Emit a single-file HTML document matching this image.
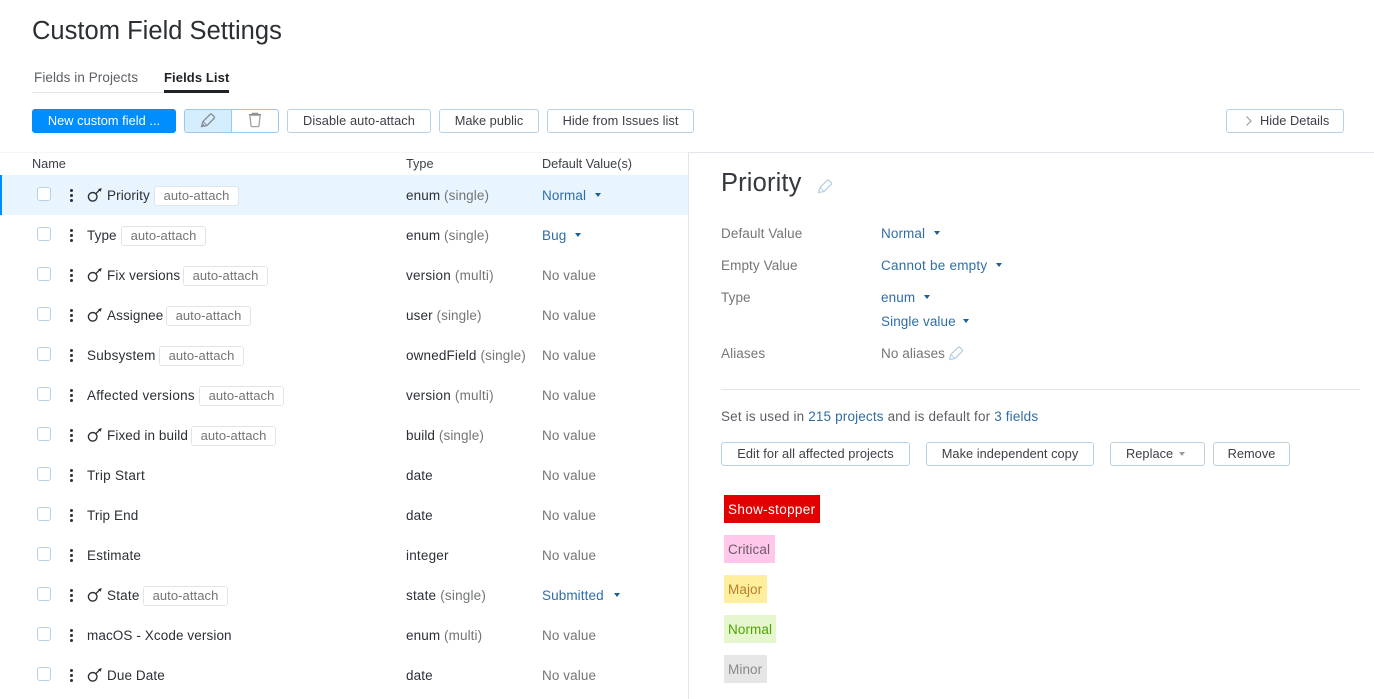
<!DOCTYPE html>
<html lang="en">
<head>
<meta charset="utf-8">
<title>Custom Field Settings</title>
<style>
html,body{margin:0;padding:0;background:#fff}
body{width:1374px;height:699px;overflow:hidden;position:relative;font-family:"Liberation Sans",sans-serif;font-size:13.5px;color:#2c2f38}
.t{position:absolute;white-space:nowrap;line-height:18px;letter-spacing:.1px;margin-top:1px}
.g{color:#737577}
.b{color:#2f6ea5}
.h{font-size:12.7px;letter-spacing:0;margin-top:0;color:#3c3f48}
.btn{position:absolute;box-sizing:border-box;height:24px;border:1px solid #b8d1e5;border-radius:3px;background:#fff;line-height:22px;text-align:center;white-space:nowrap;letter-spacing:.03px;font-size:12.8px;color:#3c3f48}
.tag{position:absolute;box-sizing:border-box;height:20px;width:85px;border:1px solid #dfe5eb;border-radius:3px;background:#fff;line-height:18px;text-align:center;color:#737577;letter-spacing:.07px;font-size:13px;white-space:nowrap}
.cb{position:absolute;left:37px;box-sizing:border-box;width:14px;height:14px;border:1px solid #b8d1e5;border-radius:3px;background:#fff}
.dots{position:absolute;left:70px;width:3px;height:3px;border-radius:50%;background:#2c2f38;box-shadow:0 5px 0 #2c2f38,0 10px 0 #2c2f38}
.car{position:absolute;width:0;height:0;border-left:3px solid transparent;border-right:3px solid transparent;border-top:4px solid #1d5f96}
.key{position:absolute;left:87px;width:16px;height:16px}
.lab{position:absolute;left:724px;height:28px;line-height:30px;padding:0 4px;box-sizing:border-box;white-space:nowrap;letter-spacing:.1px}
svg{display:block}
</style>
</head>
<body>
<div class="t" style="left:32px;top:14px;font-size:25.5px;line-height:32px;letter-spacing:.02px;color:#2b2f33">Custom Field Settings</div>

<div class="t" style="left:34px;top:68px;color:#5c6066;letter-spacing:.07px">Fields in Projects</div>
<div class="t" style="left:164px;top:68px;font-size:13px;font-weight:bold;color:#1f2326;letter-spacing:.1px">Fields List</div>
<div style="position:absolute;left:32px;top:92px;width:132px;height:1px;background:#dfe5eb"></div>
<div style="position:absolute;left:164px;top:90px;width:65px;height:3px;background:#1f2326"></div>

<div class="btn" style="left:32px;top:109px;width:144px;background:#008eff;border-color:#008eff;color:#fff">New custom field ...</div>
<div style="position:absolute;left:184px;top:109px;width:95px;height:24px;box-sizing:border-box;border:1px solid #9cc9ee;border-radius:3px;background:#fff;overflow:hidden">
  <div style="position:absolute;left:0;top:0;width:46px;height:22px;background:#d4edff;border-right:1px solid #9cc9ee"></div>
</div>
<svg style="position:absolute;left:200px;top:112px" width="16" height="16" viewBox="0 0 16 16" fill="none" stroke="#8a8d90" stroke-width="1.300"><path d="M1.500 14.500L3 9.500l7-7q1-1 2 0l2 2q1 1 0 2l-7 7z"/><path d="M3 9.500l4 4" stroke-width="1"/><path d="M1.500 14.500l1-3.200 2.200 2.200z" fill="#8a8d90" stroke="none"/></svg>
<svg style="position:absolute;left:247px;top:112px" width="16" height="16" viewBox="0 0 16 16" fill="none" stroke="#8a8d90"><path d="M2 2.800h12" stroke-width="1.800"/><path d="M5.500 2.500V1.300h5v1.200" stroke-width="1.200"/><path d="M3 4l1 10 .8.600h6.400l.8-.6 1-10" stroke="#a0a2a4" stroke-width="1.300"/></svg>

<div class="btn" style="left:287px;top:109px;width:144px;letter-spacing:.09px">Disable auto-attach</div>
<div class="btn" style="left:439px;top:109px;width:100px">Make public</div>
<div class="btn" style="left:547px;top:109px;width:147px">Hide from Issues list</div>
<div class="btn" style="left:1226px;top:109px;width:118px;text-align:left;padding-left:33px">Hide Details</div>
<svg style="position:absolute;left:1245px;top:115px" width="8" height="12" viewBox="0 0 8 12" fill="none" stroke="#999" stroke-width="1.100"><path d="M1.500 1.500L6 6l-4.500 4.500"/></svg>

<div style="position:absolute;left:0;top:152px;width:688px;height:1px;background:#f3f5f7"></div>
<div style="position:absolute;left:688px;top:152px;width:686px;height:1px;background:#dfe5eb"></div>
<div style="position:absolute;left:688px;top:152px;width:1px;height:547px;background:#dfe5eb"></div>

<div class="t h" style="left:32px;top:155px">Name</div>
<div class="t h" style="left:406px;top:155px">Type</div>
<div class="t h" style="left:542px;top:155px">Default Value(s)</div>

<div style="position:absolute;left:0;top:175px;width:688px;height:40px;background:#e8f4fe"></div>
<div style="position:absolute;left:0;top:175px;width:2px;height:40px;background:#008eff"></div>

<svg width="0" height="0" style="position:absolute"><defs><symbol id="k" viewBox="0 0 16 16"><circle cx="5.700" cy="9.800" r="4.300" fill="none" stroke="#2c2f38" stroke-width="1.400"/><path d="M8.800 6.700L13.500 2" stroke="#2c2f38" stroke-width="1.300" fill="none"/><path d="M11 2.200L14.700 1l-.9 3.800z" fill="#2c2f38"/></symbol></defs></svg>

<!-- Row 1 -->
<div class="cb" style="top:187px"></div><div class="dots" style="top:189px"></div>
<svg class="key" style="top:187px"><use href="#k"/></svg>
<div class="t" style="left:107px;top:186px">Priority</div><div class="tag" style="left:154px;top:186px">auto-attach</div>
<div class="t" style="left:406px;top:186px">enum <span class="g">(single)</span></div>
<div class="t b" style="left:542px;top:186px">Normal</div><div class="car" style="left:595px;top:193px"></div>

<!-- Row 2 -->
<div class="cb" style="top:227px"></div><div class="dots" style="top:229px"></div>
<div class="t" style="left:87px;top:226px">Type</div><div class="tag" style="left:121px;top:226px">auto-attach</div>
<div class="t" style="left:406px;top:226px">enum <span class="g">(single)</span></div>
<div class="t b" style="left:542px;top:226px">Bug</div><div class="car" style="left:575px;top:233px"></div>

<!-- Row 3 -->
<div class="cb" style="top:267px"></div><div class="dots" style="top:269px"></div>
<svg class="key" style="top:267px"><use href="#k"/></svg>
<div class="t" style="left:107px;top:266px">Fix versions</div><div class="tag" style="left:183px;top:266px">auto-attach</div>
<div class="t" style="left:406px;top:266px;letter-spacing:.2px">version <span class="g">(multi)</span></div>
<div class="t g" style="left:542px;top:266px">No value</div>

<!-- Row 4 -->
<div class="cb" style="top:307px"></div><div class="dots" style="top:309px"></div>
<svg class="key" style="top:307px"><use href="#k"/></svg>
<div class="t" style="left:107px;top:306px">Assignee</div><div class="tag" style="left:166px;top:306px">auto-attach</div>
<div class="t" style="left:406px;top:306px">user <span class="g">(single)</span></div>
<div class="t g" style="left:542px;top:306px">No value</div>

<!-- Row 5 -->
<div class="cb" style="top:347px"></div><div class="dots" style="top:349px"></div>
<div class="t" style="left:87px;top:346px;letter-spacing:.2px">Subsystem</div><div class="tag" style="left:159px;top:346px">auto-attach</div>
<div class="t" style="left:406px;top:346px;letter-spacing:.15px">ownedField <span class="g">(single)</span></div>
<div class="t g" style="left:542px;top:346px">No value</div>

<!-- Row 6 -->
<div class="cb" style="top:387px"></div><div class="dots" style="top:389px"></div>
<div class="t" style="left:87px;top:386px;letter-spacing:.27px">Affected versions</div><div class="tag" style="left:199px;top:386px">auto-attach</div>
<div class="t" style="left:406px;top:386px;letter-spacing:.2px">version <span class="g">(multi)</span></div>
<div class="t g" style="left:542px;top:386px">No value</div>

<!-- Row 7 -->
<div class="cb" style="top:427px"></div><div class="dots" style="top:429px"></div>
<svg class="key" style="top:427px"><use href="#k"/></svg>
<div class="t" style="left:107px;top:426px">Fixed in build</div><div class="tag" style="left:191px;top:426px">auto-attach</div>
<div class="t" style="left:406px;top:426px">build <span class="g">(single)</span></div>
<div class="t g" style="left:542px;top:426px">No value</div>

<!-- Row 8 -->
<div class="cb" style="top:467px"></div><div class="dots" style="top:469px"></div>
<div class="t" style="left:87px;top:466px;letter-spacing:.3px">Trip Start</div>
<div class="t" style="left:406px;top:466px">date</div>
<div class="t g" style="left:542px;top:466px">No value</div>

<!-- Row 9 -->
<div class="cb" style="top:507px"></div><div class="dots" style="top:509px"></div>
<div class="t" style="left:87px;top:506px">Trip End</div>
<div class="t" style="left:406px;top:506px">date</div>
<div class="t g" style="left:542px;top:506px">No value</div>

<!-- Row 10 -->
<div class="cb" style="top:547px"></div><div class="dots" style="top:549px"></div>
<div class="t" style="left:87px;top:546px;letter-spacing:.2px">Estimate</div>
<div class="t" style="left:406px;top:546px;letter-spacing:.2px">integer</div>
<div class="t g" style="left:542px;top:546px">No value</div>

<!-- Row 11 -->
<div class="cb" style="top:587px"></div><div class="dots" style="top:589px"></div>
<svg class="key" style="top:587px"><use href="#k"/></svg>
<div class="t" style="left:107px;top:586px;letter-spacing:.2px">State</div><div class="tag" style="left:143px;top:586px">auto-attach</div>
<div class="t" style="left:406px;top:586px;letter-spacing:.2px">state <span class="g">(single)</span></div>
<div class="t b" style="left:542px;top:586px">Submitted</div><div class="car" style="left:614px;top:593px"></div>

<!-- Row 12 -->
<div class="cb" style="top:627px"></div><div class="dots" style="top:629px"></div>
<div class="t" style="left:87px;top:626px">macOS - Xcode version</div>
<div class="t" style="left:406px;top:626px">enum <span class="g">(multi)</span></div>
<div class="t g" style="left:542px;top:626px">No value</div>

<!-- Row 13 -->
<div class="cb" style="top:667px"></div><div class="dots" style="top:669px"></div>
<svg class="key" style="top:667px"><use href="#k"/></svg>
<div class="t" style="left:107px;top:666px">Due Date</div>
<div class="t" style="left:406px;top:666px">date</div>
<div class="t g" style="left:542px;top:666px">No value</div>

<!-- Details -->
<div class="t" style="left:721px;top:166px;font-size:25.500px;line-height:32px;letter-spacing:.15px;color:#363a40">Priority</div>
<svg style="position:absolute;left:817px;top:178px" width="16" height="16" viewBox="0 0 16 16" fill="none" stroke="#b8d1e5" stroke-width="1.300"><path d="M1.500 14.500L3 9.500l7-7q1-1 2 0l2 2q1 1 0 2l-7 7z"/><path d="M3 9.500l4 4" stroke-width="1"/></svg>

<div class="t g" style="left:721px;top:224px">Default Value</div>
<div class="t b" style="left:881px;top:224px">Normal</div><div class="car" style="left:934px;top:231px"></div>
<div class="t g" style="left:721px;top:256px">Empty Value</div>
<div class="t b" style="left:881px;top:256px;letter-spacing:.24px">Cannot be empty</div><div class="car" style="left:996px;top:263px"></div>
<div class="t g" style="left:721px;top:288px">Type</div>
<div class="t b" style="left:881px;top:288px">enum</div><div class="car" style="left:924px;top:295px"></div>
<div class="t b" style="left:881px;top:312px">Single value</div><div class="car" style="left:963px;top:319px"></div>
<div class="t g" style="left:721px;top:344px">Aliases</div>
<div class="t g" style="left:881px;top:344px">No aliases</div>
<svg style="position:absolute;left:948px;top:345px" width="16" height="16" viewBox="0 0 16 16" fill="none" stroke="#b8d1e5" stroke-width="1.300"><path d="M1.500 14.500L3 9.500l7-7q1-1 2 0l2 2q1 1 0 2l-7 7z"/><path d="M3 9.500l4 4" stroke-width="1"/></svg>

<div style="position:absolute;left:721px;top:389px;width:639px;height:1px;background:#dfe5eb"></div>

<div class="t" style="left:721px;top:407px;color:#5c6066;letter-spacing:.16px">Set is used in <span class="b">215 projects</span> and is default for <span class="b">3 fields</span></div>

<div class="btn" style="left:721px;top:442px;width:189px;letter-spacing:.08px">Edit for all affected projects</div>
<div class="btn" style="left:926px;top:442px;width:168px">Make independent copy</div>
<div class="btn" style="left:1110px;top:442px;width:95px;text-align:left;padding-left:15px">Replace</div>
<div class="car" style="left:1179px;top:452px;border-top-color:#9a9c9e"></div>
<div class="btn" style="left:1213px;top:442px;width:77px">Remove</div>

<div class="lab" style="top:495px;width:96px;background:#e30000;color:#fff;letter-spacing:.35px">Show-stopper</div>
<div class="lab" style="top:535px;width:51px;background:#ffc8ea;color:#6e5a68">Critical</div>
<div class="lab" style="top:575px;width:43px;background:#ffee9c;color:#b5802e">Major</div>
<div class="lab" style="top:615px;width:52px;background:#e6f6cf;color:#4da400">Normal</div>
<div class="lab" style="top:655px;width:43px;background:#e6e6e6;color:#888">Minor</div>
</body>
</html>
